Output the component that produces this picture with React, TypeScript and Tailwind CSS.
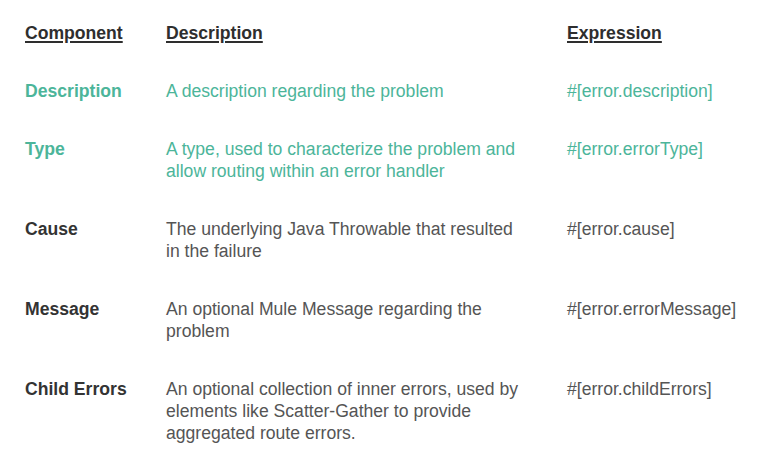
const rows = [
  {
    name: "Description",
    desc: "A description regarding the problem",
    expr: "#[error.description]",
    accent: true,
  },
  {
    name: "Type",
    desc: "A type, used to characterize the problem and allow routing within an error handler",
    expr: "#[error.errorType]",
    accent: true,
  },
  {
    name: "Cause",
    desc: "The underlying Java Throwable that resulted in the failure",
    expr: "#[error.cause]",
    accent: false,
  },
  {
    name: "Message",
    desc: "An optional Mule Message regarding the problem",
    expr: "#[error.errorMessage]",
    accent: false,
  },
  {
    name: "Child Errors",
    desc: "An optional collection of inner errors, used by elements like Scatter-Gather to provide aggregated route errors.",
    expr: "#[error.childErrors]",
    accent: false,
  },
];

export default function App() {
  return (
    <div className="w-[768px] h-[452px] bg-white overflow-hidden pl-[25px] pt-[4px] font-['Liberation_Sans',Arial,sans-serif] text-[17.6px] leading-[22px]">
      {/* Header */}
      <div className="grid grid-cols-[141px_401px_1fr] py-[18px] font-bold text-[#2e2e2e]">
        <span className="underline underline-offset-[2px] decoration-[2px]">Component</span>
        <span className="underline underline-offset-[2px] decoration-[2px]">Description</span>
        <span className="underline underline-offset-[2px] decoration-[2px]">Expression</span>
      </div>

      {rows.map((row) => (
        <div
          key={row.name}
          className={`grid grid-cols-[141px_401px_1fr] py-[18px] ${row.accent ? "text-[#4cb59a]" : "text-[#555555]"}`}
        >
          <span className={`font-bold ${row.accent ? "" : "text-[#333333]"}`}>{row.name}</span>
          <span className="pr-[43px]">{row.desc}</span>
          <span>{row.expr}</span>
        </div>
      ))}
    </div>
  );
}
